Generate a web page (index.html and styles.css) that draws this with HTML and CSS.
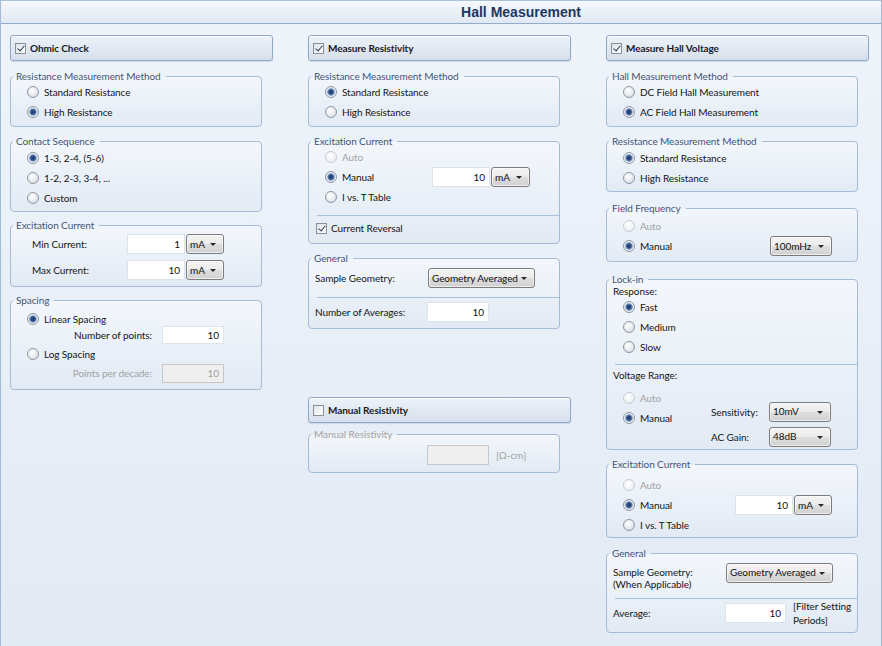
FILE: index.html
```html
<!DOCTYPE html>
<html lang="en">
<head>
<meta charset="utf-8">
<title>Hall Measurement</title>
<link rel="stylesheet" href="styles.css">
</head>
<body>
<div class="window">
  <header class="titlebar"><h1>Hall Measurement</h1></header>
  <main class="columns">
    <!-- Column 1 -->
    <section class="col">
      <div class="head"><span class="cb on"></span>Ohmic Check</div>
      <fieldset class="group g-a">
        <legend>Resistance Measurement Method</legend>
        <div class="row"><span class="radio"></span>Standard Resistance</div>
        <div class="row"><span class="radio on"></span>High Resistance</div>
      </fieldset>
      <fieldset class="group g-b">
        <legend>Contact Sequence</legend>
        <div class="row"><span class="radio on"></span>1-3, 2-4, (5-6)</div>
        <div class="row"><span class="radio"></span>1-2, 2-3, 3-4, ...</div>
        <div class="row"><span class="radio"></span>Custom</div>
      </fieldset>
      <fieldset class="group g-c">
        <legend>Excitation Current</legend>
        <div class="row r26 lblrow"><span class="lbl l95">Min Current:</span><span class="inp w58">1</span><span class="sel w38">mA</span></div>
        <div class="row r26 lblrow"><span class="lbl l95">Max Current:</span><span class="inp w58">10</span><span class="sel w38">mA</span></div>
      </fieldset>
      <fieldset class="group g-d">
        <legend>Spacing</legend>
        <div class="row r14"><span class="radio on"></span>Linear Spacing</div>
        <div class="row r18 subrow"><span class="sublbl">Number of points:</span><span class="inp w62 h18">10</span></div>
        <div class="row"><span class="radio"></span>Log Spacing</div>
        <div class="row r18 subrow dis"><span class="sublbl">Points per decade:</span><span class="inp w62 h19 disabled">10</span></div>
      </fieldset>
    </section>

    <!-- Column 2 -->
    <section class="col">
      <div class="head"><span class="cb on"></span>Measure Resistivity</div>
      <fieldset class="group g-a">
        <legend>Resistance Measurement Method</legend>
        <div class="row"><span class="radio on"></span>Standard Resistance</div>
        <div class="row"><span class="radio"></span>High Resistance</div>
      </fieldset>
      <fieldset class="group g-e">
        <legend>Excitation Current</legend>
        <div class="row dis"><span class="radio"></span>Auto</div>
        <div class="row"><span class="opt o107"><span class="radio on"></span>Manual</span><span class="inp w58">10</span><span class="sel w39">mA</span></div>
        <div class="row"><span class="radio"></span>I vs. T Table</div>
        <div class="sep"></div>
        <div class="row cbrow"><span class="cb on"></span>Current Reversal</div>
      </fieldset>
      <fieldset class="group g-f">
        <legend>General</legend>
        <div class="row r24 plain"><span class="lbl l112">Sample Geometry:</span><span class="sel w107">Geometry Averaged</span></div>
        <div class="sep s7"></div>
        <div class="row plain after-sep"><span class="lbl l112">Number of Averages:</span><span class="inp w62">10</span></div>
      </fieldset>

      <div class="head head-lower"><span class="cb"></span>Manual Resistivity</div>
      <fieldset class="group g-g dis">
        <legend>Manual Resistivity</legend>
        <div class="row r22 mr"><span class="inp w62 disabled"></span><span class="unit">[Ω-cm]</span></div>
      </fieldset>
    </section>

    <!-- Column 3 -->
    <section class="col">
      <div class="head"><span class="cb on"></span>Measure Hall Voltage</div>
      <fieldset class="group g-a">
        <legend>Hall Measurement Method</legend>
        <div class="row"><span class="radio"></span>DC Field Hall Measurement</div>
        <div class="row"><span class="radio on"></span>AC Field Hall Measurement</div>
      </fieldset>
      <fieldset class="group g-b">
        <legend>Resistance Measurement Method</legend>
        <div class="row"><span class="radio on"></span>Standard Resistance</div>
        <div class="row"><span class="radio"></span>High Resistance</div>
      </fieldset>
      <fieldset class="group g-h">
        <legend>Field Frequency</legend>
        <div class="row dis"><span class="radio"></span>Auto</div>
        <div class="row"><span class="opt o146"><span class="radio on"></span>Manual</span><span class="sel w62">100mHz</span></div>
      </fieldset>
      <fieldset class="group g-i">
        <legend>Lock-in</legend>
        <div class="row r12 plain">Response:</div>
        <div class="row"><span class="radio on"></span>Fast</div>
        <div class="row"><span class="radio"></span>Medium</div>
        <div class="row"><span class="radio"></span>Slow</div>
        <div class="sep"></div>
        <div class="row plain vr">Voltage Range:</div>
        <div class="range">
          <div class="range-opts">
            <div class="row dis"><span class="opt o88"><span class="radio"></span>Auto</span></div>
            <div class="row"><span class="opt o88"><span class="radio on"></span>Manual</span></div>
          </div>
          <div class="range-grid">
            <span class="lbl l58">Sensitivity:</span><span class="sel w62 h19">10mV</span>
            <span class="lbl l58">AC Gain:</span><span class="sel w62 h19">48dB</span>
          </div>
        </div>
      </fieldset>
      <fieldset class="group g-j">
        <legend>Excitation Current</legend>
        <div class="row dis"><span class="radio"></span>Auto</div>
        <div class="row"><span class="opt o112"><span class="radio on"></span>Manual</span><span class="inp w58">10</span><span class="sel w38">mA</span></div>
        <div class="row"><span class="radio"></span>I vs. T Table</div>
      </fieldset>
      <fieldset class="group g-k">
        <legend>General</legend>
        <div class="row plain top"><span class="lbl l112 two">Sample Geometry:<br>(When Applicable)</span><span class="sel w107 h19">Geometry Averaged</span></div>
        <div class="sep s8"></div>
        <div class="row r24 plain after-sep2"><span class="lbl l112">Average:</span><span class="inp w61">10</span><span class="note">[Filter Setting Periods]</span></div>
      </fieldset>
    </section>
  </main>
</div>
</body>
</html>
```

FILE: styles.css
```css
* { box-sizing: border-box; }

html, body {
  margin: 0;
  padding: 0;
}

body {
  font-family: Lato, "Segoe UI", "Liberation Sans", sans-serif;
  font-size: 10px;
  letter-spacing: -0.08px;
  color: #141414;
  background: #e6eef7;
}

.window {
  width: 882px;
  height: 646px;
  border-left: 1px solid #a3b9d5;
  border-right: 1px solid #a3b9d5;
  background: linear-gradient(#eef4fa, #e2eaf4);
  overflow: hidden;
}

/* Title bar */
.titlebar {
  height: 24px;
  border-top: 1px solid #aac0db;
  border-bottom: 1px solid #93abca;
  background: linear-gradient(#f6f9fd, #dfe8f3);
  display: flex;
  align-items: center;
  justify-content: center;
  padding-left: 160px;
}

.titlebar h1 {
  margin: 0;
  font-family: "Liberation Sans", Arial, sans-serif;
  font-size: 14px;
  font-weight: bold;
  letter-spacing: 0;
  color: #1c3766;
}

/* Columns */
.columns {
  display: grid;
  grid-template-columns: repeat(3, 263px);
  column-gap: 35px;
  padding: 11px 0 0 9px;
  align-items: start;
}

.col {
  display: flex;
  flex-direction: column;
  align-items: flex-start;
}

/* Section header bars */
.head {
  width: 263px;
  height: 26px;
  border: 1px solid #8fa8c8;
  border-radius: 3px;
  background: linear-gradient(#eef3f9, #d5dfec);
  box-shadow: inset 0 1px 0 rgba(255, 255, 255, 0.85), 0 1px 1px rgba(120, 145, 180, 0.25);
  display: flex;
  align-items: center;
  padding-left: 4px;
  font-weight: bold;
  font-size: 10px;
  color: #1a1a24;
}

.head .cb { margin-right: 4px; }

.head-lower { margin-top: 68px; }

/* Check box */
.cb {
  position: relative;
  flex: none;
  width: 11px;
  height: 11px;
  border: 1px solid #8c9097;
  background: linear-gradient(135deg, #dfe3e8, #ffffff);
}

.cb.on::after {
  content: "";
  position: absolute;
  left: 3px;
  top: 0px;
  width: 3px;
  height: 6px;
  border-right: 1.5px solid #2c3b56;
  border-bottom: 1.5px solid #2c3b56;
  transform: rotate(40deg);
}

/* Group boxes */
.group {
  width: 252px;
  min-inline-size: 0;
  margin: 8px 0 0 0;
  padding: 0 0 3px 0;
  border: 1px solid #a6bbd6;
  border-radius: 4px;
  background: linear-gradient(#f3f7fc, #e2eaf4);
}

.group legend {
  margin-left: 2px;
  padding: 0 5px 0 3px;
  line-height: 12px;
  font-size: 10px;
  color: #3f5576;
}

.g-a { margin-top: 9px; padding-bottom: 4px; }
.g-b { margin-top: 8px; padding-top: 1px; padding-bottom: 3px; }
.g-c { margin-top: 7px; padding-bottom: 3px; }
.g-d { margin-top: 7px; padding-top: 6px; padding-bottom: 7px; }
.g-e { margin-top: 8px; padding-bottom: 5px; }
.g-f { margin-top: 8px; padding-top: 2px; padding-bottom: 6px; }
.g-g { margin-top: 5px; padding-top: 4px; padding-bottom: 6px; }
.g-h { margin-top: 10px; padding-top: 2px; padding-bottom: 5px; }
.g-i { margin-top: 11px; padding-bottom: 2px; }
.g-j { margin-top: 8px; padding-top: 5px; padding-bottom: 2px; }
.g-k { margin-top: 9px; padding-top: 4px; padding-bottom: 7px; }

/* Rows */
.row {
  display: flex;
  align-items: center;
  height: 20px;
  padding-left: 16px;
  white-space: nowrap;
}

.r12 { height: 12px; }
.r14 { height: 14px; }
.r18 { height: 18px; }
.r22 { height: 22px; }
.r24 { height: 24px; }
.r26 { height: 26px; }

.row.plain { padding-left: 6px; }
.row.lblrow { padding-left: 21px; }
.row.cbrow { padding-left: 7px; margin-top: 2px; }
.row.cbrow .cb { margin-right: 4px; }
.row.subrow { padding-left: 0; }
.row.top { align-items: flex-start; height: 27px; }
.row.mr { padding-left: 118px; }
.after-sep { margin-top: 4px; }
.after-sep2 { margin-top: 2px; }
.vr { margin-top: 0; }

.dis, .dis legend { color: #a2a2a2 !important; }

.lbl { flex: none; }
.l58 { width: 58px; }
.l95 { width: 95px; }
.l112 { width: 112px; }

.two {
  margin-top: 3px;
  line-height: 12px;
}

.sublbl {
  width: 141px;
  margin-right: 10px;
  text-align: right;
}

.opt {
  display: flex;
  align-items: center;
  flex: none;
}
.o88 { width: 88px; }
.o107 { width: 107px; }
.o112 { width: 112px; }
.o146 { width: 146px; }

/* Radio buttons */
.radio {
  flex: none;
  width: 12px;
  height: 12px;
  margin-right: 5px;
  border-radius: 50%;
  border: 1px solid #8d97a4;
  background: radial-gradient(circle at 40% 35%, #ffffff 0, #eef0f3 40%, #cdd3da 100%);
}

.radio.on {
  background: radial-gradient(circle at 50% 50%, #1f3c6e 0, #2b4c82 2px, #7f9cc6 3.3px, #eef1f5 4.3px, #d3d9e0 100%);
}

.dis .radio {
  border-color: #c6ccd3;
  background: radial-gradient(circle at 40% 35%, #ffffff 0, #f1f2f4 60%, #e3e6ea 100%);
}

/* Text inputs */
.inp {
  flex: none;
  height: 20px;
  border: 1px solid #dde3eb;
  background: #ffffff;
  text-align: right;
  padding-right: 4px;
  line-height: 18px;
  color: #111;
}
.inp.disabled {
  background: #efefef;
  border-color: #c8c8c8;
  color: #a0a0a0;
}
.h18 { height: 18px; line-height: 16px; }
.h19 { height: 19px; line-height: 17px; }

.w38 { width: 38px; }
.w39 { width: 39px; }
.w58 { width: 58px; }
.w61 { width: 61px; }
.w62 { width: 62px; }
.w107 { width: 107px; }

/* Drop downs */
.sel {
  position: relative;
  flex: none;
  height: 20px;
  margin-left: 1px;
  border: 1px solid #7c7c7c;
  border-radius: 3px;
  background: linear-gradient(#f4f4f4 0%, #ebebeb 48%, #dedede 52%, #d0d0d0 100%);
  padding-left: 3px;
  line-height: 18px;
  color: #111;
  box-shadow: inset 0 0 0 1px rgba(255, 255, 255, 0.6);
}
.sel.h19 { line-height: 17px; }

.sel::after {
  content: "";
  position: absolute;
  right: 7px;
  top: 50%;
  margin-top: -1px;
  border-left: 3px solid transparent;
  border-right: 3px solid transparent;
  border-top: 3px solid #2a2a2a;
}

.range-grid .sel { margin-left: 0; }

/* Separators */
.sep {
  height: 1px;
  margin: 7px 0 0 8px;
  background: #a9bfdb;
}
.g-e .sep { margin-top: 8px; }
.s7 { margin-top: 7px; }
.s8 { margin-top: 8px; }

/* Lock-in voltage range */
.range {
  display: flex;
  margin-top: 3px;
}

.range-grid {
  display: grid;
  grid-template-columns: 58px 62px;
  row-gap: 5px;
  align-items: center;
  margin-top: 14px;
}

.unit {
  margin-left: 7px;
}

.note {
  width: 64px;
  margin-left: 7px;
  white-space: normal;
  line-height: 14px;
}
```
